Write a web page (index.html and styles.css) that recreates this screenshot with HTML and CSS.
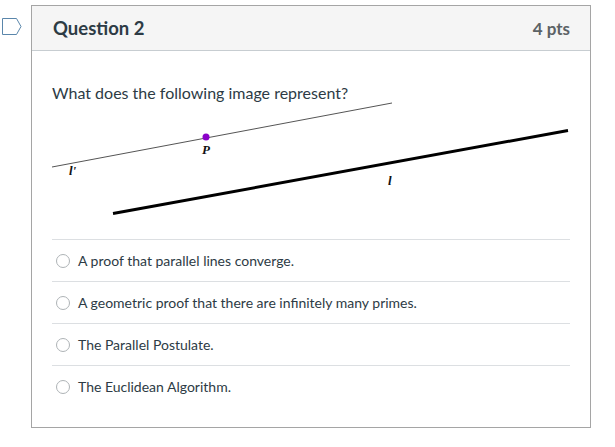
FILE: index.html
```html
<!DOCTYPE html>
<html>
<head>
<meta charset="utf-8">
<link rel="stylesheet" href="styles.css">
</head>
<body>
<div class="page">
  <div class="flag-col">
    <svg class="flag" width="20" height="17" viewBox="0 0 20 17">
      <path d="M0.5 0.5 H14.5 L19 8.5 L14.5 16.5 H0.5 Z" fill="none" stroke="#5a86ab" stroke-width="1"/>
    </svg>
  </div>
  <div class="card">
    <div class="card-header">
      <h2 class="title">Question 2</h2>
      <span class="pts">4 pts</span>
    </div>
    <div class="card-body">
      <p class="question">What does the following image represent?</p>
      <svg class="figure" width="520" height="118" viewBox="0 0 520 118">
        <line x1="0" y1="67" x2="340" y2="3" stroke="#555" stroke-width="1"/>
        <line x1="61" y1="113.5" x2="516" y2="30.5" stroke="#000" stroke-width="3"/>
        <circle cx="154" cy="37" r="3.5" fill="#8a00c8"/>
        <text x="150" y="54" class="lbl">P</text>
        <text x="17" y="75" class="lbl">l'</text>
        <text x="336" y="85" class="lbl">l</text>
      </svg>
      <ul class="answers">
        <li class="answer"><span class="radio"></span><span>A proof that parallel lines converge.</span></li>
        <li class="answer"><span class="radio"></span><span>A geometric proof that there are infinitely many primes.</span></li>
        <li class="answer"><span class="radio"></span><span>The Parallel Postulate.</span></li>
        <li class="answer"><span class="radio"></span><span>The Euclidean Algorithm.</span></li>
      </ul>
    </div>
  </div>
</div>
</body>
</html>
```
FILE: styles.css
```css
html, body {
  margin: 0;
  padding: 0;
  background: #fff;
}
body {
  font-family: Lato, "Open Sans", sans-serif;
  color: #2d3b45;
}
.page {
  display: flex;
  align-items: flex-start;
  padding-top: 5px;
}
.flag-col {
  width: 31px;
  flex: 0 0 31px;
  padding-top: 13px;
  padding-left: 2px;
  box-sizing: border-box;
}
.flag {
  display: block;
}
.card {
  width: 560px;
  height: 423px;
  box-sizing: border-box;
  border: 1px solid #a5a5a5;
  display: flex;
  flex-direction: column;
}
.card-header {
  height: 45px;
  box-sizing: border-box;
  background: #f5f5f5;
  border-bottom: 1px solid #c7cdd1;
  display: flex;
  align-items: center;
  justify-content: space-between;
  padding: 0 20px 0 21px;
}
.title {
  margin: 0;
  font-size: 18.5px;
  font-weight: 700;
  color: #2d3b45;
}
.pts {
  font-size: 17px;
  font-weight: 700;
  color: #5c6266;
}
.card-body {
  padding: 30px 20px 20px 20px;
}
.question {
  margin: 0;
  font-size: 16px;
  line-height: 24px;
  color: #2d3b45;
}
.figure {
  display: block;
  margin-top: -5px;
}
.lbl {
  font-family: "Liberation Serif", serif;
  font-style: italic;
  font-weight: 700;
  font-size: 13px;
  fill: #111;
}
.answers {
  list-style: none;
  margin: 21px 0 0 0;
  padding: 0;
}
.answer {
  height: 42px;
  box-sizing: border-box;
  border-top: 1px solid #dcdfe2;
  display: flex;
  align-items: center;
  font-size: 14px;
  color: #2d3b45;
}
.radio {
  width: 12px;
  height: 12px;
  border: 1px solid #aeb3b6;
  border-radius: 50%;
  margin: 0 8px 0 4px;
  flex: 0 0 auto;
}
```
